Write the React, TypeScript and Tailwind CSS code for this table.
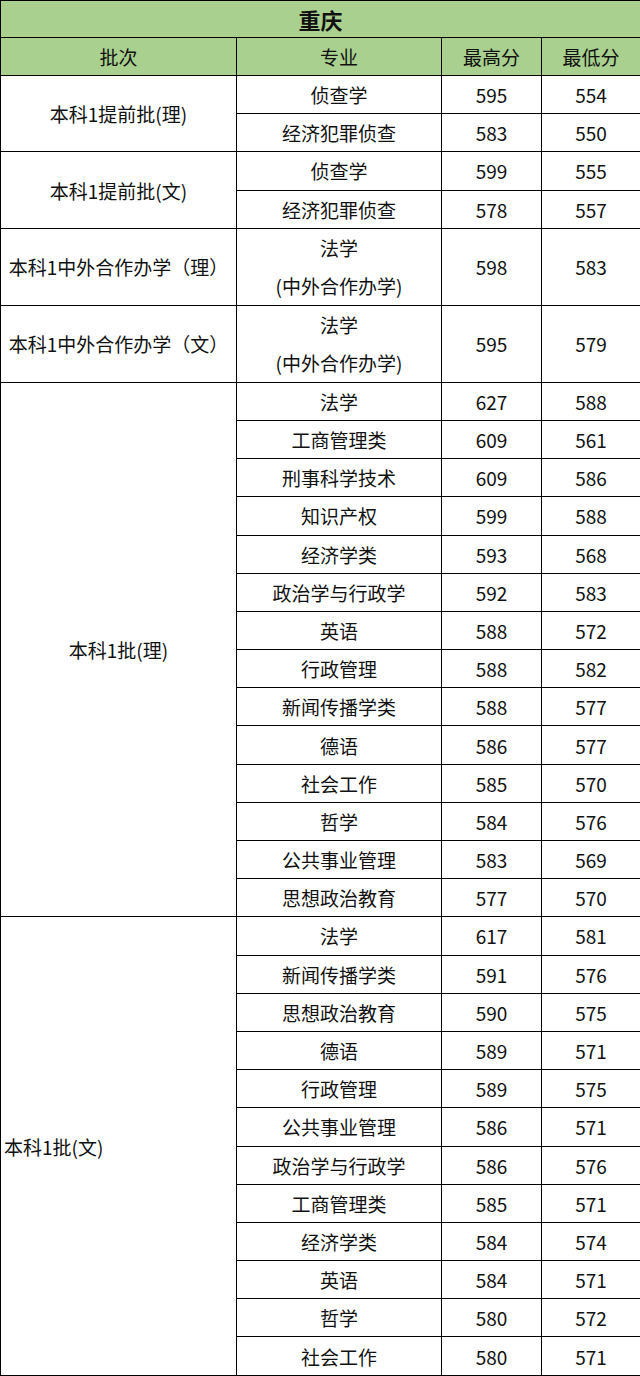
type Row = { major: string; max: string; min: string };
type Group = { batch: string; rows: Row[]; left?: boolean; twoLine?: boolean };

const groups: Group[] = [
  {
    batch: '本科1提前批(理)',
    rows: [
      { major: '侦查学', max: '595', min: '554' },
      { major: '经济犯罪侦查', max: '583', min: '550' },
    ],
  },
  {
    batch: '本科1提前批(文)',
    rows: [
      { major: '侦查学', max: '599', min: '555' },
      { major: '经济犯罪侦查', max: '578', min: '557' },
    ],
  },
  {
    batch: '本科1中外合作办学（理）',
    twoLine: true,
    rows: [{ major: '法学', max: '598', min: '583' }],
  },
  {
    batch: '本科1中外合作办学（文）',
    twoLine: true,
    rows: [{ major: '法学', max: '595', min: '579' }],
  },
  {
    batch: '本科1批(理)',
    rows: [
      { major: '法学', max: '627', min: '588' },
      { major: '工商管理类', max: '609', min: '561' },
      { major: '刑事科学技术', max: '609', min: '586' },
      { major: '知识产权', max: '599', min: '588' },
      { major: '经济学类', max: '593', min: '568' },
      { major: '政治学与行政学', max: '592', min: '583' },
      { major: '英语', max: '588', min: '572' },
      { major: '行政管理', max: '588', min: '582' },
      { major: '新闻传播学类', max: '588', min: '577' },
      { major: '德语', max: '586', min: '577' },
      { major: '社会工作', max: '585', min: '570' },
      { major: '哲学', max: '584', min: '576' },
      { major: '公共事业管理', max: '583', min: '569' },
      { major: '思想政治教育', max: '577', min: '570' },
    ],
  },
  {
    batch: '本科1批(文)',
    left: true,
    rows: [
      { major: '法学', max: '617', min: '581' },
      { major: '新闻传播学类', max: '591', min: '576' },
      { major: '思想政治教育', max: '590', min: '575' },
      { major: '德语', max: '589', min: '571' },
      { major: '行政管理', max: '589', min: '575' },
      { major: '公共事业管理', max: '586', min: '571' },
      { major: '政治学与行政学', max: '586', min: '576' },
      { major: '工商管理类', max: '585', min: '571' },
      { major: '经济学类', max: '584', min: '574' },
      { major: '英语', max: '584', min: '571' },
      { major: '哲学', max: '580', min: '572' },
      { major: '社会工作', max: '580', min: '571' },
    ],
  },
];

const cell = 'border border-black text-center align-middle p-0';

export default function App() {
  return (
    <div className="w-[640px] h-[1376px] overflow-hidden bg-white text-[19px] text-[#111] font-['Noto_Sans_CJK_SC','Noto_Sans',sans-serif]">
      <table className="w-[640px] border-collapse table-fixed leading-none">
        <colgroup>
          <col className="w-[236px]" />
          <col className="w-[205px]" />
          <col className="w-[100px]" />
          <col className="w-[99px]" />
        </colgroup>
        <tbody>
          <tr className="h-[37px] bg-[#a9d08e]">
            <td colSpan={4} className={`${cell} text-[22px] font-bold`}>
              重庆
            </td>
          </tr>
          <tr className="h-[38px] bg-[#a9d08e]">
            <td className={cell}>批次</td>
            <td className={cell}>专业</td>
            <td className={cell}>最高分</td>
            <td className={cell}>最低分</td>
          </tr>
          {groups.map((g) =>
            g.twoLine
              ? [
                  <tr key={g.batch + 'a'} className="h-[38.2px]">
                    <td rowSpan={2} className={cell}>{g.batch}</td>
                    <td rowSpan={2} className={`${cell} leading-[38px]`}>
                      <div>{g.rows[0].major}</div>
                      <div>(中外合作办学)</div>
                    </td>
                    <td rowSpan={2} className={cell}>{g.rows[0].max}</td>
                    <td rowSpan={2} className={cell}>{g.rows[0].min}</td>
                  </tr>,
                  <tr key={g.batch + 'b'} className="h-[38.2px]" />,
                ]
              : g.rows.map((r, i) => (
                  <tr key={g.batch + i} className="h-[38.2px]">
                    {i === 0 && (
                      <td
                        rowSpan={g.rows.length}
                        className={`${cell} ${g.left ? 'text-left pl-[3px]' : ''}`}
                      >
                        {g.batch}
                      </td>
                    )}
                    <td className={cell}>{r.major}</td>
                    <td className={cell}>{r.max}</td>
                    <td className={cell}>{r.min}</td>
                  </tr>
                ))
          )}
        </tbody>
      </table>
    </div>
  );
}
